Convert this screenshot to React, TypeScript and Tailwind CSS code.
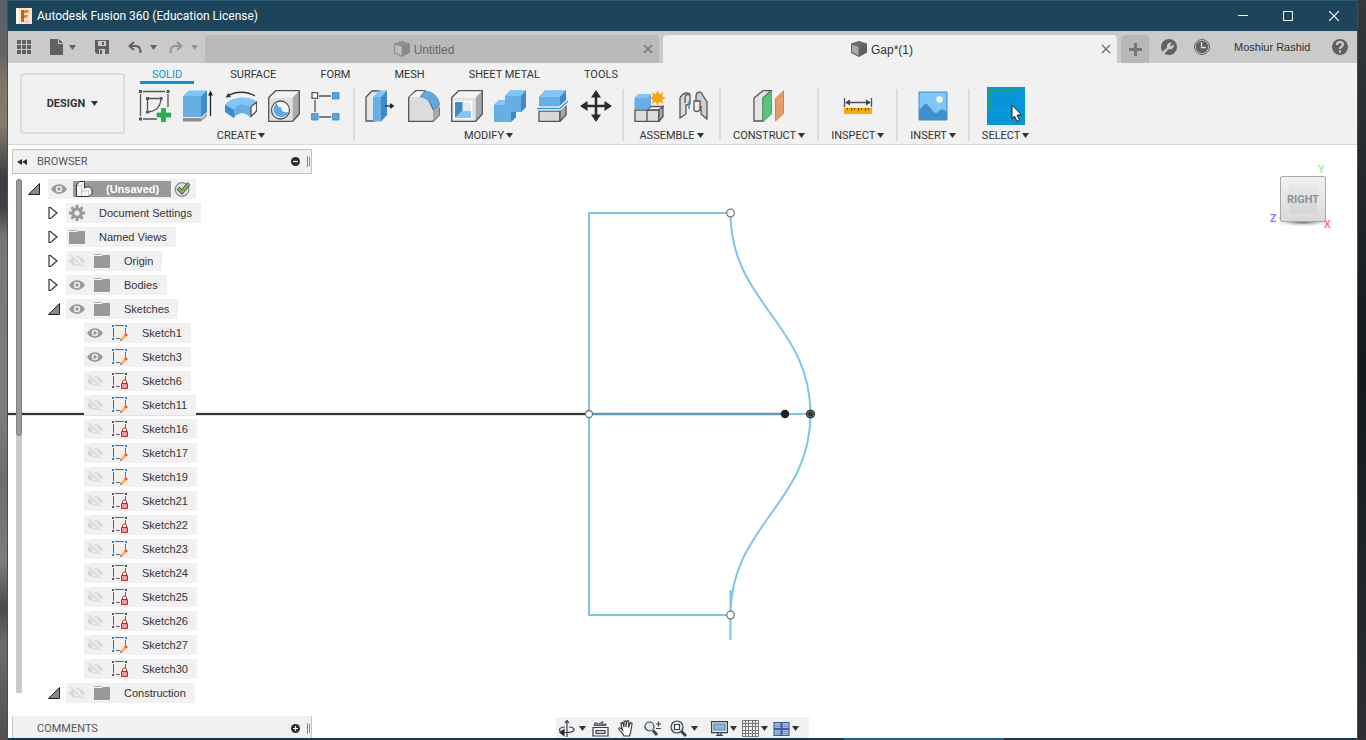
import type { ReactNode } from "react";
import clsx from "clsx";

type SketchIcon = "pencil" | "lock";

type TreeNode = {
  label: string;
  level: 1 | 2;
  arrow?: "open" | "closed";
  eye?: "on" | "off";
  icon: "gear" | "folder" | SketchIcon;
};

const sketches: [string, SketchIcon][] = [
  ["Sketch1", "pencil"],
  ["Sketch3", "pencil"],
  ["Sketch6", "lock"],
  ["Sketch11", "pencil"],
  ["Sketch16", "lock"],
  ["Sketch17", "pencil"],
  ["Sketch19", "pencil"],
  ["Sketch21", "lock"],
  ["Sketch22", "lock"],
  ["Sketch23", "pencil"],
  ["Sketch24", "lock"],
  ["Sketch25", "lock"],
  ["Sketch26", "lock"],
  ["Sketch27", "pencil"],
  ["Sketch30", "lock"],
];

const visibleSketches = ["Sketch1", "Sketch3"];

const tree: TreeNode[] = [
  { label: "Document Settings", level: 1, arrow: "closed", icon: "gear" },
  { label: "Named Views", level: 1, arrow: "closed", icon: "folder" },
  { label: "Origin", level: 1, arrow: "closed", eye: "off", icon: "folder" },
  { label: "Bodies", level: 1, arrow: "closed", eye: "on", icon: "folder" },
  { label: "Sketches", level: 1, arrow: "open", eye: "on", icon: "folder" },
  ...sketches.map(
    ([label, icon]): TreeNode => ({
      label,
      level: 2,
      eye: visibleSketches.includes(label) ? "on" : "off",
      icon,
    })
  ),
  { label: "Construction", level: 1, arrow: "open", eye: "off", icon: "folder" },
];

/* ---------- small shared bits ---------- */

function Caret({ className = "text-[#333]" }: { className?: string }) {
  return (
    <svg width="7" height="5" viewBox="0 0 7 5" className={clsx("shrink-0", className)}>
      <path d="M0 0h7L3.5 5z" fill="currentColor" />
    </svg>
  );
}

function CloseX() {
  return (
    <svg width="10" height="10" viewBox="0 0 10 10" stroke="#777" strokeWidth="1.5">
      <path d="M1 1l8 8M9 1L1 9" />
    </svg>
  );
}

function DocCube({ faded }: { faded?: boolean }) {
  return (
    <svg width="16" height="16" viewBox="0 0 16 16" opacity={faded ? 0.55 : 1}>
      <path d="M0 2.500L8 0l8 2.500v9L8 16l-8-4z" fill="#606060" />
      <path d="M.7 3.200L8 5.500v9.600L.7 11.600z" fill={faded ? "#c4c4c4" : "#aaa"} stroke="#666" strokeWidth=".8" />
      <path d="M1 2.800L8 5l7-2.200L8 .8z" fill="#6f6f6f" />
    </svg>
  );
}

/* ---------- title bar ---------- */

function TitleBar() {
  return (
    <header className="flex h-[31px] items-center border-t border-[#2f5a72] bg-[#1c445b] pl-2 text-white">
      <svg width="16" height="16" viewBox="0 0 16 16">
        <path d="M0 0h16v16H0z" fill="#fbe3cf" />
        <path d="M0 0h3v16H0z" fill="#fff3e6" />
        <path d="M5 2h8l-1 3H8v2h4l-1 3H8v4H5z" fill="#e08a35" />
        <path d="M5 2h3v12l-3-1z" fill="#b8651c" />
        <path d="M9 14h4" stroke="#e8a878" />
      </svg>
      <h1 className="ml-[5px] flex-1 font-[Roboto,sans-serif] text-[12px]">
        Autodesk Fusion 360 (Education License)
      </h1>
      <button aria-label="Minimize" className="flex h-full w-[45px] items-center justify-center">
        <svg width="10" height="10" viewBox="0 0 10 10" stroke="#fff">
          <path d="M0 4.500h10" />
        </svg>
      </button>
      <button aria-label="Maximize" className="flex h-full w-[46px] items-center justify-center">
        <svg width="10" height="10" viewBox="0 0 10 10" stroke="#fff" fill="none">
          <path d="M.5.5h9v9h-9z" />
        </svg>
      </button>
      <button aria-label="Close" className="flex h-full w-[46px] items-center justify-center">
        <svg width="10" height="10" viewBox="0 0 10 10" stroke="#fff" strokeWidth="1.200">
          <path d="M0 0l10 10M10 0L0 10" />
        </svg>
      </button>
    </header>
  );
}

/* ---------- quick access + document tabs ---------- */

function DocTab({ label, active }: { label: string; active?: boolean }) {
  return (
    <div
      className={clsx(
        "flex h-7 flex-1 items-center rounded-t-[4px] pr-1.5",
        active ? "bg-[#f1f1f1] text-[#333]" : "bg-[#bababa] text-[#666]"
      )}
    >
      <button className="flex h-full flex-1 items-center justify-center gap-1 text-[12px]">
        <DocCube faded={!active} />
        <span className="pt-0.5">{label}</span>
      </button>
      <button aria-label={`Close ${label}`}>
        <CloseX />
      </button>
    </div>
  );
}

function TabBar() {
  return (
    <div className="flex h-8 items-end bg-[#cacaca]">
      <div className="flex h-full w-[197px] shrink-0 items-center pl-[9px]">
        <button aria-label="Data panel">
          <svg width="14" height="14" viewBox="0 0 14 14" fill="#606060">
            <path d="M0 0h4v4H0zM5 0h4v4H5zM10 0h4v4h-4zM0 5h4v4H0zM5 5h4v4H5zM10 5h4v4h-4zM0 10h4v4H0zM5 10h4v4H5zM10 10h4v4h-4z" />
          </svg>
        </button>
        <button aria-label="File" className="ml-[19px] flex items-center gap-1.5">
          <svg width="13" height="16" viewBox="0 0 13 16" fill="#606060">
            <path d="M0 0h8v5h5v11H0zM9 0l4 4H9z" />
          </svg>
          <Caret className="text-[#606060]" />
        </button>
        <button aria-label="Save" className="ml-[19px]">
          <svg width="14" height="14" viewBox="0 0 14 14">
            <path d="M0 0h14v14H2l-2-2z" fill="#606060" />
            <path d="M3 1h8v5H3zM4 9h6v5H4z" fill="#cacaca" />
            <path d="M7 2h2v3H7zM5 10h2v4H5z" fill="#606060" />
          </svg>
        </button>
        <button aria-label="Undo" className="ml-[19px] flex items-center gap-2">
          <svg width="14" height="13" viewBox="0 0 14 13" fill="none" stroke="#606060" strokeWidth="2">
            <path d="M6 1L1.500 5 6 9M2 5h6c3 0 4.500 2 4.500 7" />
          </svg>
          <Caret className="text-[#606060]" />
        </button>
        <button aria-label="Redo" className="ml-3 flex items-center gap-2">
          <svg width="14" height="13" viewBox="0 0 14 13" fill="none" stroke="#959595" strokeWidth="2">
            <path d="M8 1l4.500 4L8 9M12 5H6C3 5 1.500 7 1.500 12" />
          </svg>
          <Caret className="text-[#959595]" />
        </button>
      </div>

      <div className="flex flex-1 gap-1">
        <DocTab label="Untitled" />
        <DocTab label="Gap*(1)" active />
      </div>

      <button
        aria-label="New tab"
        className="ml-1 flex h-7 w-7 items-center justify-center rounded-t-[4px] bg-[#b8b8b8]"
      >
        <svg width="13" height="13" viewBox="0 0 13 13" stroke="#777" strokeWidth="3">
          <path d="M6.500 0v13M0 6.500h13" />
        </svg>
      </button>
      <div className="flex h-full shrink-0 items-center pr-[9px] pl-3">
        <button aria-label="Extensions">
          <svg width="16" height="16" viewBox="0 0 16 16">
            <circle cx="8" cy="8" r="8" fill="#606060" />
            <path
              d="M1 13l5-4.500c-.5-2 .5-4.500 3-5 .8-.1 1.500 0 2 .2L9 6l1.300 1.300L12.700 5c.7 2.500-.8 5-3.200 5.200-.8 0-1.200 0-1.700-.2L3 15z"
              fill="#cacaca"
            />
          </svg>
        </button>
        <button aria-label="Job status" className="ml-[17px]">
          <svg width="16" height="16" viewBox="0 0 16 16">
            <circle cx="8" cy="8" r="7.500" fill="none" stroke="#606060" />
            <circle cx="8" cy="8" r="6.200" fill="#606060" />
            <path d="M7.500 3v5.500H12" fill="none" stroke="#d8d8d8" strokeWidth="1.300" />
          </svg>
        </button>
        <button className="ml-6 w-[74px] text-[11px] whitespace-nowrap text-[#333]">Moshiur Rashid</button>
        <button aria-label="Help" className="ml-6">
          <svg width="16" height="16" viewBox="0 0 16 16">
            <circle cx="8" cy="8" r="8" fill="#606060" />
            <path d="M5 6c0-4 6-3.800 6-.5C11 7.500 8 7.500 8 10" fill="none" stroke="#d5d5d5" strokeWidth="2" />
            <path d="M7 11.500h2v2H7z" fill="#d5d5d5" />
          </svg>
        </button>
      </div>
    </div>
  );
}

/* ---------- ribbon ---------- */

const line = { stroke: "#555", strokeWidth: 1.3 };

function Tool({ name, children }: { name: string; children: ReactNode }) {
  return (
    <button aria-label={name}>
      <svg width="32" height="32" viewBox="0 0 32 32" fill="none">
        {children}
      </svg>
    </button>
  );
}

function RibbonGroup({ label, tight, children }: { label: string; tight?: boolean; children: ReactNode }) {
  return (
    <section className={clsx("flex flex-col items-center", tight ? "px-2.5" : "px-3")}>
      <div className="flex h-[38px] items-center gap-[11px]">{children}</div>
      <button className="flex h-5 items-center gap-0.5 text-[11px] text-[#333]">
        <span className="pt-0.5">{label}</span>
        <Caret />
      </button>
    </section>
  );
}

function Divider() {
  return <div className="mt-0.5 h-[52px] w-0.5 shrink-0 bg-[#dcdcdc]" />;
}

function Ribbon() {
  const tabs = ["SURFACE", "FORM", "MESH", "SHEET METAL", "TOOLS"];
  return (
    <div className="flex h-[82px] border-b border-[#d6d6d6] bg-[#f1f1f1] pl-3 font-[Roboto,sans-serif]">
      <button className="mt-2.5 flex h-[61px] w-[105px] shrink-0 items-center justify-center gap-1.5 rounded-[4px] border-2 border-[#dcdcdc] text-[11px] font-bold text-[#333]">
        <span className="pt-0.5">DESIGN</span>
        <Caret />
      </button>
      <div className="ml-1">
        <nav className="flex h-[21px] gap-5 pl-[11px] text-[11px] text-[#333]">
          <button className="mr-1 border-b-3 border-[#0696d7] px-3 pt-1 text-[#0696d7]">SOLID</button>
          {tabs.map((t) => (
            <button key={t} className="px-3 pt-1">
              {t}
            </button>
          ))}
        </nav>

        <div className="flex pt-[3px]">
          <RibbonGroup label="CREATE" tight>
            <Tool name="Create Sketch">
              <path d="M4 1.500h22M1.500 4v22M29 4v13M4 29h14" {...line} />
              <path d="M10 8.500h10M8.500 10v10M22 10c-1 7-5 11-12 12" {...line} />
              <path
                d="M0 0h3v3H0zM27.500 0h3v3h-3zM0 27.500h3v3H0zM7 7h3v3H7zM20.500 7h3v3h-3zM7 20.500h3v3H7z"
                fill="#555"
              />
              <path d="M22.500 18.500h4v4.500H32v4h-5.500v5h-4v-5H18v-4h4.500z" fill="#22b14c" stroke="#189a3e" strokeWidth=".6" />
            </Tool>
            <Tool name="Extrude">
              <path d="M1 28h18v3.500H1z" fill="#8e8e8e" />
              <path d="M19 28l6-5v3.500l-6 5z" fill="#aaa" />
              <path d="M1 6h18v21H1z" fill="#67aee4" />
              <path d="M1 6l6-5.500h18L19 6z" fill="#7fc4fa" />
              <path d="M19 6l6-5.500V22l-6 5z" fill="#3e8bc8" />
              <path d="M28.500 4v22" stroke="#222" strokeWidth="1.300" />
              <path d="M28.500.5l2.500 5h-5z" fill="#222" />
            </Tool>
            <Tool name="Revolve">
              <path d="M3 6C10 1 22 1 30 6" stroke="#333" strokeWidth="1.300" />
              <path d="M.5 7.500L3.500 3l2.500 4z" fill="#333" />
              <path d="M0 15C6 6 26 6 32 12v9l-7 6c-5-5-12-5-16 1L0 21z" fill="#67aee4" />
              <path d="M0 15C7 6 26 6 32 12l-6 6C20 13 12 13 9 20z" fill="#80c6fb" />
              <path d="M0 15l9 5v8l-9-6z" fill="#3e8bc8" />
              <path d="M26 17l5.500-5v9L26 26.500z" fill="#fff" {...line} />
            </Tool>
            <Tool name="Hole">
              <path d="M.7 7.500h24v23.800H.7z" fill="#e0e0e0" />
              <path d="M.7 7.500l7-6.800h23.600l-6.600 6.800z" fill="#f4f4f4" />
              <path d="M24.700 7.500L31.300.7V24l-6.600 7.300z" fill="#aaa" />
              <path d="M.7 7.500l7-6.800h23.600V24l-6.600 7.300H.7z" {...line} />
              <circle cx="12.500" cy="20" r="9" fill="#f6f6f6" {...line} />
              <path d="M9 13a7.700 7.700 0 1 0 11.500 9c-5 1-8-1-7-5-3 1-4-1-4.500-4z" fill="#5fa9e0" />
            </Tool>
            <Tool name="Rectangular Pattern">
              <path d="M8 6h12M4 10v12M8 27h12" {...line} />
              <path d="M1 2.700h5.600v5.600H1z" fill="#fff" {...line} />
              <path d="M21.500 2.500h6.500V9h-6.500zM.5 23.500H7V30H.5zM21.500 23.500h6.500V30h-6.500z" fill="#5aa3dc" stroke="#3f87c0" strokeWidth=".8" />
            </Tool>
          </RibbonGroup>
          <Divider />

          <RibbonGroup label="MODIFY" tight>
            <Tool name="Press Pull">
              <path d="M1 7l6-6h8v24l-6 6H1z" fill="#e6e6e6" {...line} />
              <path d="M8 7h8v24.500H8z" fill="#67aee4" />
              <path d="M8 7l6-6.500h8L16 7z" fill="#7fc4fa" />
              <path d="M16 7l6-6.500V25l-6 6.500z" fill="#3e8bc8" />
              <path d="M20 16h6" stroke="#222" strokeWidth="1.300" />
              <path d="M29.500 16L25 13v6z" fill="#222" />
            </Tool>
            <Tool name="Fillet">
              <path d="M.7 7.500l7-6.800h9L25 19l6.300-1v7L25 31.300H.7z" fill="#dcdcdc" {...line} />
              <path d="M1.500 7L8 1.500h8L12 7z" fill="#f5f5f5" />
              <path d="M25 20l6.300-5v10L25 31z" fill="#aaa" />
              <path d="M12 6.500L17 1c9 1 14 7 14.500 14L25 20C24 12 19 8 12 6.500z" fill="#5fa9e0" stroke="#3e8bc8" strokeWidth=".8" />
            </Tool>
            <Tool name="Shell">
              <path d="M.7 7.500h24v23.800H.7z" fill="#e0e0e0" />
              <path d="M.7 7.500l7-6.800h23.600l-6.600 6.800z" fill="#f4f4f4" />
              <path d="M24.700 7.500L31.300.7V24l-6.600 7.300z" fill="#a8a8a8" />
              <path d="M.7 7.500l7-6.800h23.600V24l-6.600 7.300H.7z" {...line} />
              <path d="M3.500 11.500h17v17h-17z" fill="#e8e8e8" stroke="#fff" strokeWidth="1.500" />
              <path d="M4 12h7.500v9L4 28z" fill="#3e8bc8" />
              <path d="M11.500 21H20v7H4z" fill="#80c6fb" />
            </Tool>
            <Tool name="Combine">
              <path d="M0 15l5-5h6V6l5-5.500h16V17l-5 5h-5v5l-5 5H0z" fill="#67aee4" />
              <path d="M0 15l5-5h6v5zM11 6l5-5.500h16L27 6z" fill="#80c6fb" />
              <path d="M27 6l5-5.500V17l-5 5zM17 22h5v5l-5 5z" fill="#3e8bc8" />
            </Tool>
            <Tool name="Split Body">
              <path d="M2 7l6-6.500h21V11l-6 7H2z" fill="#67aee4" />
              <path d="M2 7l6-6.500h21L23 7z" fill="#80c6fb" />
              <path d="M23 7l6-6.500V11l-6 6z" fill="#3e8bc8" />
              <path d="M2 21h21v10.300H2z" fill="#d8d8d8" {...line} />
              <path d="M23 21l6-6v10l-6 6.300z" fill="#a8a8a8" {...line} />
              <path d="M0 18.500h23l8-7.500" stroke="#fff" strokeWidth="4" />
              <path d="M0 18.500h23l8-7.500" stroke="#2a94dc" strokeWidth="1.500" />
            </Tool>
            <Tool name="Move">
              <path d="M16 5v22M5 16h22" stroke="#2b2b2b" strokeWidth="2.600" />
              <path d="M16 0l5 7.500H11zM16 32l5-7.500H11zM0 16l7.500-5v10zM32 16l-7.500-5v10z" fill="#2b2b2b" />
            </Tool>
          </RibbonGroup>
          <Divider />

          <RibbonGroup label="ASSEMBLE" tight>
            <Tool name="New Component">
              <path d="M1 20h12v11.300H1zM13 20h12v11.300H13z" fill="#dcdcdc" {...line} />
              <path d="M13 20l4-3.500h12L25 20z" fill="#f5f5f5" {...line} />
              <path d="M25 20l4-3.500v10l-4 4.800z" fill="#aaa" {...line} />
              <path d="M.5 8l4-4H17v12l-3.500 3.500H.5z" fill="#67aee4" />
              <path d="M.5 8l4-4H17l-3.500 4z" fill="#80c6fb" />
              <path
                d="M23.500 0l1.700 4.500 4-2.600-1.300 4.600 4.100 1.500-4.100 1.500 1.300 4.500-4-2.500-1.700 4.500-1.700-4.500-4 2.500 1.300-4.500L15 8l4.100-1.500-1.300-4.600 4 2.600z"
                fill="#f7a400"
              />
            </Tool>
            <Tool name="Joint">
              <path d="M3 8c2-5 9-7 10-3v9l-4 1v9l-6 4z" fill="#dcdcdc" {...line} />
              <path d="M8 13V8c0-3 2-5 5-4" {...line} />
              <path d="M12 11v8" stroke="#2a94dc" strokeWidth="1.500" />
              <path d="M19 6c0-4 5-5 6-2l5 8v17l-6-5v-7l-5 3z" fill="#d0d0d0" {...line} />
              <path d="M17 11h6v9c-2 2-5 2-6 0z" fill="#eee" {...line} />
              <circle cx="11" cy="4.500" r="1.200" fill="#777" />
            </Tool>
          </RibbonGroup>
          <Divider />

          <RibbonGroup label="CONSTRUCT">
            <Tool name="Offset Plane">
              <path d="M1 8l9-7.300h8L10 8v23H1z" fill="#e4e4e4" {...line} />
              <path d="M10 8.500L18.500 1v23L10 31.500z" fill="#5ac47d" stroke="#3fae66" />
              <path d="M22.500 8.500l8-7.500v22.500l-8 7.500z" fill="#e79b69" stroke="#cf8352" />
            </Tool>
          </RibbonGroup>
          <Divider />

          <RibbonGroup label="INSPECT">
            <Tool name="Measure">
              <path d="M2.500 8v9M29.500 8v9M6 12.500h20" {...line} />
              <path d="M3 12.500l5-3v6zM29 12.500l-5-3v6z" fill="#444" />
              <path d="M2 18h28v6H2z" fill="#fba800" />
              <path d="M5.500 18v2M9.500 18v3M12.500 18v2M16.500 18v3M19.500 18v2M23.500 18v3M26.500 18v2" stroke="#6b4a00" />
            </Tool>
          </RibbonGroup>
          <Divider />

          <RibbonGroup label="INSERT">
            <Tool name="Insert Image">
              <path d="M2 2h28v28H2z" fill="#80c6fb" stroke="#3e8bc8" />
              <path d="M2 21c4-6 7-9 9-6 4 5 7 11 11 6 3-3 5-1 8 1v8H2z" fill="#3e90cc" />
              <circle cx="22.500" cy="9.500" r="3.200" fill="#fdf7c8" />
            </Tool>
          </RibbonGroup>
          <Divider />

          <RibbonGroup label="SELECT">
            <button aria-label="Select" className="bg-[#0696d7]">
              <svg width="38" height="38" viewBox="0 0 38 38" fill="none">
                <path d="M3.500 3.500h27v21h-27z" stroke="#1fb53c" strokeDasharray="5 2" />
                <path d="M25 18l9.500 10H30l2.500 5-2.500 1.500-2.500-5.500-2.500 3z" fill="#fff" stroke="#222" />
              </svg>
            </button>
          </RibbonGroup>
        </div>
      </div>
    </div>
  );
}

/* ---------- browser panel ---------- */

function Arrow({ state }: { state?: "open" | "closed" }) {
  if (state === "open") {
    return (
      <svg width="12" height="12" viewBox="0 0 12 12">
        <path d="M11.500.5v11H.5z" fill="#8a8a8a" stroke="#222" />
      </svg>
    );
  }
  return (
    <svg width="10" height="14" viewBox="0 0 10 14">
      <path d="M1 1.500h1.500L9 7l-6.500 5.500H1z" fill="#fff" stroke="#333" strokeWidth="1.200" />
    </svg>
  );
}

function Eye({ off }: { off?: boolean }) {
  const c = off ? "#d9d9d9" : "#999";
  return (
    <svg width="16" height="12" viewBox="0 0 16 12">
      <path d="M0 6c4-6.500 12-6.500 16 0-4 6.500-12 6.500-16 0z" fill={c} />
      <circle cx="8" cy="6" r="3.200" fill="#f1f1f1" />
      <circle cx="8" cy="6" r="1.800" fill={c} />
      {off && (
        <>
          <path d="M1.500-.5l14 12" stroke="#f1f1f1" strokeWidth="3" />
          <path d="M1 0l13.500 12" stroke={c} strokeWidth="1.500" />
        </>
      )}
    </svg>
  );
}

function NodeIcon({ icon }: { icon: TreeNode["icon"] }) {
  if (icon === "folder") {
    return (
      <svg width="16" height="14" viewBox="0 0 16 14" fill="#999">
        <path d="M0 0h7l1 1H0z" opacity=".7" />
        <path d="M0 2h8l1-1h7v13H0z" />
      </svg>
    );
  }
  if (icon === "gear") {
    return (
      <svg width="16" height="16" viewBox="0 0 16 16" fill="none" stroke="#999">
        <circle cx="8" cy="8" r="4.200" strokeWidth="3.200" />
        <path
          d="M8 0v3M8 13v3M0 8h3M13 8h3M2.300 2.300l2.200 2.200M11.500 11.500l2.200 2.200M2.300 13.700l2.200-2.200M11.500 4.500l2.200-2.200"
          strokeWidth="2.800"
        />
      </svg>
    );
  }
  const dot = icon === "pencil" ? "#0d8ae6" : "#555";
  return (
    <svg width="16" height="16" viewBox="0 0 16 16" fill="none">
      <path d="M3 .5h9M1.500 3v9M13.500 3v5M4 13.500h4" stroke="#666" />
      <path d="M0 0h2v2H0zM13 0h2v2h-2zM0 13h2v2H0z" fill={dot} />
      {icon === "pencil" ? (
        <>
          <path d="M9.500 14.500L14 9.800" stroke="#fbbc45" strokeWidth="3" />
          <path d="M13.300 10.500l1.500-1.500" stroke="#ee4048" strokeWidth="3" />
          <path d="M8 13.500l2.500 2.300H8z" fill="#777" />
        </>
      ) : (
        <>
          <path d="M10.500 10V8.500c0-2 4-2 4 0V10" stroke="#c62828" />
          <path d="M9.500 10.500h6v5h-6z" fill="#e39a9a" stroke="#c62828" />
        </>
      )}
    </svg>
  );
}

function TreeRow({ node }: { node: TreeNode }) {
  return (
    <li className={clsx("flex h-5 items-center", node.level === 1 ? "pl-[26px]" : "pl-[62px]")}>
      {node.arrow && (
        <button aria-label={`Toggle ${node.label}`} className="w-3.5 shrink-0">
          <Arrow state={node.arrow} />
        </button>
      )}
      <div className={clsx("flex h-full items-center bg-[#f1f1f1] pr-[9px] pl-[3px]", node.arrow && "ml-1")}>
        {node.eye && (
          <button aria-label={`Show or hide ${node.label}`} className="mr-[9px]">
            <Eye off={node.eye === "off"} />
          </button>
        )}
        <NodeIcon icon={node.icon} />
        <span className="ml-3.5 whitespace-nowrap">{node.label}</span>
      </div>
    </li>
  );
}

function Grip() {
  return (
    <svg width="3" height="11" viewBox="0 0 3 11" stroke="#888">
      <path d="M.5 0v11M2.500 1v9" />
    </svg>
  );
}

function RoundButton({ name, plus }: { name: string; plus?: boolean }) {
  return (
    <button aria-label={name}>
      <svg width="9" height="9" viewBox="0 0 9 9">
        <circle cx="4.500" cy="4.500" r="4.500" fill="#2b2b2b" />
        <path d={plus ? "M2 4.500h5M4.500 2v5" : "M2 4.500h5"} stroke="#f1f1f1" strokeWidth="1.200" />
      </svg>
    </button>
  );
}

function BrowserPanel() {
  return (
    <aside className="relative ml-1 flex w-[300px] flex-col pt-1">
      <div className="flex h-[25px] items-center border border-[#c4c4c4] bg-[#f1f1f1] pl-1 font-[Roboto,sans-serif]">
        <button aria-label="Collapse panel">
          <svg width="10" height="6" viewBox="0 0 10 6" fill="#333">
            <path d="M5 0v6L0 3zM10 0v6L5 3z" />
          </svg>
        </button>
        <h2 className="ml-2.5 flex-1 pt-0.5 text-[11px] text-[#555]">BROWSER</h2>
        <RoundButton name="Collapse browser" />
        <div className="mr-px ml-[7px]">
          <Grip />
        </div>
      </div>

      <div className="mt-[5px] flex pl-1 text-[11px] text-[#333]">
        {/* scroll track and thumb */}
        <div className="h-[514px] w-1.5 shrink-0 rounded-t-full bg-[#c9cacc]">
          <div className="h-[257px] rounded-full border border-[#808083] bg-[#9b9b9d]" />
        </div>

        <ul className="flex flex-col gap-1">
          <li className="flex h-5 items-center pl-1.5">
            <button aria-label="Toggle (Unsaved)" className="w-5 shrink-0">
              <Arrow state="open" />
            </button>
            <div className="flex h-full items-center bg-[#f1f1f1] pr-1.5 pl-[3px]">
              <button aria-label="Show or hide (Unsaved)">
                <Eye />
              </button>
              <div className="ml-1.5 flex h-4 items-center bg-[#999] pr-3 pl-[3px] font-bold text-white">
                <svg width="17" height="16" viewBox="0 0 17 16">
                  <path d="M.5 4l3-3.500H8.500V7l2-1h3l2.500 2v4.500l-3 3H.5z" fill="#f6f6f6" stroke="#333" />
                  <path d="M1 4.500h4.500V15M5.500 4.500l3-3M6 10l2.500-3M6 10h6.500v5M12.500 10L15.500 8" fill="none" stroke="#bbb" strokeWidth=".8" />
                </svg>
                <span className="ml-[13px]">(Unsaved)</span>
              </div>
              <button aria-label="Activate component" className="ml-[3px]">
                <svg width="16" height="16" viewBox="0 0 16 16" fill="none">
                  <circle cx="8" cy="8.500" r="6.800" fill="#dcdfe6" stroke="#888" strokeWidth="1.200" />
                  <path d="M4 7l4 4 7-8.500" stroke="#333" strokeWidth="3.800" />
                  <path d="M4 7l4 4 7-8.500" stroke="#7cc04a" strokeWidth="2.400" />
                </svg>
              </button>
            </div>
          </li>
          {tree.map((node) => (
            <TreeRow key={node.label} node={node} />
          ))}
        </ul>
      </div>

      <div className="mt-auto flex h-[22px] items-center border-x border-[#c4c4c4] bg-[#f1f1f1] pt-0.5 pl-6 font-[Roboto,sans-serif]">
        <h2 className="flex-1 pt-0.5 text-[11px] text-[#555]">COMMENTS</h2>
        <RoundButton name="Expand comments" plus />
        <div className="mr-px ml-[7px]">
          <Grip />
        </div>
      </div>
    </aside>
  );
}

/* ---------- canvas ---------- */

function SketchCanvas() {
  return (
    <svg
      className="absolute inset-0 size-full"
      viewBox="8 145 1349 593"
      preserveAspectRatio="xMidYMid slice"
      fill="none"
    >
      <path d="M8 414h581" stroke="#333" strokeWidth="2" />
      <path d="M8 412.500h777M8 415.500h777" stroke="#e2e2e2" />
      <path d="M730 213H589v402h141" stroke="#7cc6ea" strokeWidth="2" />
      <path d="M589 414h222" stroke="#7cc6ea" strokeWidth="2" />
      <path d="M589 414h196" stroke="#5a9cbf" strokeWidth="2" />
      <path
        d="M730.500 213c0 90 80 111 80 201 0 90-80 111-80 201M730.500 590v50"
        stroke="#7cc6ea"
        strokeWidth="2"
      />
      <g fill="#fff" stroke="#777" strokeWidth="1.300">
        <circle cx="730.500" cy="213" r="3.800" />
        <circle cx="730.500" cy="615" r="3.800" />
        <circle cx="589" cy="414" r="3.500" />
      </g>
      <circle cx="785" cy="414" r="4.200" fill="#222" />
      <circle cx="810.500" cy="414" r="4" fill="#333" stroke="#222" />
      <circle cx="810.500" cy="414" r="3" stroke="#999" strokeWidth=".6" />
    </svg>
  );
}

function ViewCube() {
  return (
    <button aria-label="View cube" className="absolute top-4 right-6">
      <svg width="66" height="72" viewBox="0 0 66 72" className="font-['Open_Sans',sans-serif]">
        <defs>
          <linearGradient id="face" x1="0" y1="0" x2="0" y2="1">
            <stop offset="0" stopColor="#f2f2f2" />
            <stop offset="1" stopColor="#d9d9d9" />
          </linearGradient>
          <linearGradient id="label" x1="0" y1="0" x2="0" y2="1">
            <stop offset="0" stopColor="#e6e8ea" />
            <stop offset="1" stopColor="#d3d5d8" />
          </linearGradient>
          <radialGradient id="shade">
            <stop offset="0" stopColor="#555" />
            <stop offset="1" stopColor="#fff" stopOpacity="0" />
          </radialGradient>
        </defs>
        <ellipse cx="36" cy="61" rx="32" ry="5" fill="url(#shade)" />
        <rect x="13.500" y="15.500" width="45" height="45" rx="1.500" fill="url(#face)" stroke="#aaa" />
        <path d="M22 24h28v28H22z" fill="url(#label)" />
        <text x="36" y="42" textAnchor="middle" fontSize="11" fontWeight="700" fill="#8f9399" className="font-[Roboto,sans-serif]">
          RIGHT
        </text>
        <text x="51" y="12" fontSize="10" fontWeight="700" fill="#9df59d">
          Y
        </text>
        <text x="3" y="61" fontSize="11" fontWeight="700" fill="#8585ff">
          Z
        </text>
        <path d="M12 57h2" stroke="#8585ff" />
        <text x="57" y="67" fontSize="10" fontWeight="700" fill="#ff7575">
          X
        </text>
      </svg>
    </button>
  );
}

type NavButtonProps = { name: string; caret?: boolean; tight?: boolean; children: ReactNode };

function NavButton({ name, caret, tight, children }: NavButtonProps) {
  return (
    <button aria-label={name} className={clsx("flex items-center", tight ? "gap-0.5" : "gap-1")}>
      <svg width="17" height="17" viewBox="0 0 17 17" fill="none" stroke="#3b4048" strokeWidth="1.200">
        {children}
      </svg>
      {caret && <Caret />}
    </button>
  );
}

function NavBar() {
  return (
    <div className="absolute inset-x-0 bottom-0 flex justify-center">
      <div className="flex h-[21px] w-[253px] items-center bg-[#f1f1f1] pt-0.5 pl-0.5">
        <NavButton name="Orbit" caret>
          <path d="M9 0v17M7 3l2-2.500L11 3" />
          <path d="M7 7C0 7.500 0 11.500 5 12.500M11 7c7 .5 7 4.500-1 5.500H3" />
          <path d="M2 12.500l4-3v6z" fill="#111" />
        </NavButton>
        <div className="ml-1.5 flex gap-[9px]">
          <NavButton name="Look At">
            <path d="M1 7.500h15v8.500H1z" fill="#f6f6f6" />
            <path d="M4 10.500h9v3H4z" fill="#c9ccd2" />
            <path d="M2 5.500l1-3 3.500 1.500L11 1.500l-1 2.500h4v1.500z" fill="#888d94" strokeWidth=".8" />
          </NavButton>
          <NavButton name="Pan">
            <path
              d="M6 16c-1-3-3-4-5-6.500C0 8 2 7.500 3 8.500l1.500 1.500L3 4c-.3-1.500 1.500-2 2-.5L6 7V2c0-1.500 2-1.500 2 0v5l.8-5.500c.2-1.300 2-1 2 .3L10.500 7.500 12 3.500c.5-1.300 2.300-.8 2 .5L13 10c-.3 3-1 4-1.500 6z"
              fill="#fff"
            />
          </NavButton>
          <NavButton name="Zoom">
            <circle cx="5.500" cy="6.500" r="4.500" fill="#dcebec" />
            <path d="M9 10.500l4 4.500" strokeWidth="2.800" />
            <path d="M12 4h5M14.500 1.500v5M12 8.500h5" />
          </NavButton>
          <NavButton name="Fit" caret>
            <circle cx="7" cy="7" r="6" fill="#dcebec" />
            <path d="M4.500 4.500h5v5h-5z" fill="#fff" />
            <path d="M11.500 11.500l4.500 4.500" strokeWidth="2.800" />
          </NavButton>
        </div>
        <div className="ml-[13px] flex gap-[5px]">
          <NavButton name="Display Settings" caret tight>
            <path d="M.6 1.600h15.800v11H.6z" fill="#e8eaee" />
            <path d="M3 4h11v6H3z" fill="#8db4e2" stroke="#5b82b8" />
            <path d="M5 15.500h7M7 13v2h3v-2" />
          </NavButton>
          <NavButton name="Grid and Snaps" caret tight>
            <path
              d="M.5.5h16v16H.5zM3.500.5v16M6.500.5v16M10.500.5v16M13.500.5v16M.5 3.500h16M.5 6.500h16M.5 10.500h16M.5 13.500h16"
              strokeWidth="1"
              stroke="#777"
            />
          </NavButton>
          <NavButton name="Viewports" caret tight>
            <path d="M1 2.500h7v6H1zM9 2.500h7v6H9zM1 9.500h7v6H1zM9 9.500h7v6H9z" fill="#9dbbe3" stroke="#3f5f95" />
            <path d="M3 5h3v1.500H3zM11 5h3v1.500h-3zM3 12h3v1.500H3zM11 12h3v1.500h-3z" fill="#dce8f7" stroke="#5b7fb8" strokeWidth=".7" />
          </NavButton>
        </div>
      </div>
    </div>
  );
}

export default function App() {
  return (
    <div className="flex min-h-screen bg-white font-['Liberation_Sans',Arial,sans-serif]">
      {/* desktop wallpaper showing on both sides of the window */}
      <div className="w-2 shrink-0 border-r border-[#2b566b] bg-[linear-gradient(#5d6064,#606266_7%,#7f7568_11%,#857a6c_17%,#3a3d42_24%,#3f4146_28%,#77767a_32%,#7d7d7d_55%,#6e6e6e_65%,#7c7c7c_76%,#4a4a4c_82%,#6c6c6c_87%,#505052)]" />
      <div className="flex min-w-0 flex-1 flex-col">
        <TitleBar />
        <TabBar />
        <Ribbon />
        <main className="relative flex flex-1 overflow-hidden bg-white">
          <SketchCanvas />
          <BrowserPanel />
          <ViewCube />
          <NavBar />
        </main>
        {/* top edge of the taskbar */}
        <div className="flex h-0.5 bg-[#16384f] pl-[836px]">
          <div className="w-[160px] bg-[#1d6590]" />
        </div>
      </div>
      <div className="w-[9px] shrink-0 border-l border-[#2b566b] bg-linear-to-b from-[#34373b] via-[#14181c] to-[#2d2f32]" />
    </div>
  );
}
